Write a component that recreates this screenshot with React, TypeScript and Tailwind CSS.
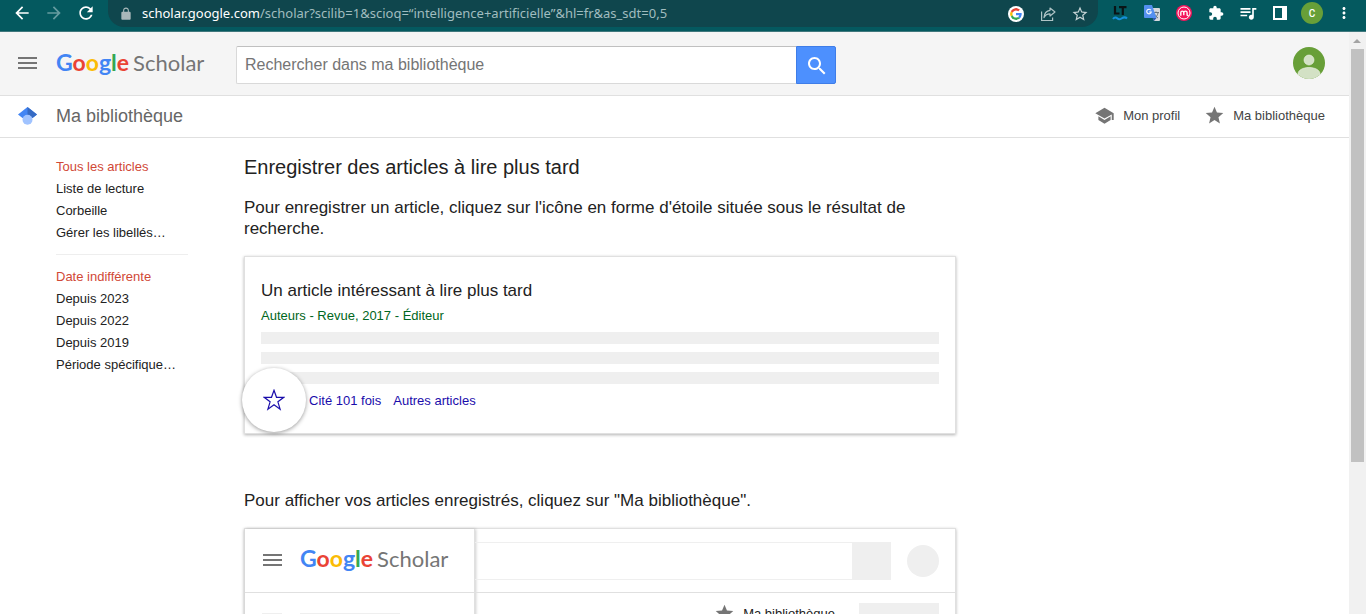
import type { ReactNode } from "react";

const libelles = ["Tous les articles", "Liste de lecture", "Corbeille", "Gérer les libellés…"];
const periodes = ["Date indifférente", "Depuis 2023", "Depuis 2022", "Depuis 2019", "Période spécifique…"];

const STAR =
  "M12 17.27L18.18 21l-1.64-7.03L22 9.24l-7.19-.61L12 2 9.19 8.63 2 9.24l5.46 4.73L5.82 21z";

function Icon({ d, className = "size-5" }: { d: string; className?: string }) {
  return (
    <svg viewBox="0 0 24 24" fill="currentColor" className={className} aria-hidden="true">
      <path d={d} />
    </svg>
  );
}

function ChromeButton({ label, children }: { label: string; children: ReactNode }) {
  return (
    <button aria-label={label} className="flex h-[26px] w-8 shrink-0 items-center justify-center">
      {children}
    </button>
  );
}

// Barre d'adresse du navigateur, avec les extensions à droite.
function BrowserBar() {
  return (
    <div className="flex h-8 shrink-0 items-start border-b border-[#40787d] bg-[#04595f] px-1.5 text-white">
      <ChromeButton label="Précédent">
        <Icon d="M20 11H7.83l5.59-5.59L12 4l-8 8 8 8 1.41-1.41L7.83 13H20v-2z" />
      </ChromeButton>
      <ChromeButton label="Suivant">
        <Icon
          d="M12 4l-1.41 1.41L16.17 11H4v2h12.17l-5.58 5.59L12 20l8-8z"
          className="size-5 text-[#669ca0]"
        />
      </ChromeButton>
      <ChromeButton label="Actualiser">
        <Icon d="M17.65 6.35C16.2 4.9 14.21 4 12 4c-4.42 0-7.99 3.58-7.99 8s3.57 8 7.99 8c3.73 0 6.84-2.55 7.73-6h-2.08c-.82 2.33-3.04 4-5.65 4-3.31 0-6-2.69-6-6s2.69-6 6-6c1.66 0 3.14.69 4.22 1.78L13 11h7V4l-2.35 2.35z" />
      </ChromeButton>

      <div className="mx-1.5 flex h-[27px] min-w-0 flex-1 items-center rounded-b-2xl bg-[#0f464d] pr-0.5 pl-[11px]">
        <Icon
          d="M18 8h-1V6c0-2.76-2.24-5-5-5S7 3.24 7 6v2H6c-1.1 0-2 .9-2 2v10c0 1.1.9 2 2 2h12c1.1 0 2-.9 2-2V10c0-1.100-.9-2-2-2zM15.100 8H8.900V6c0-1.710 1.390-3.100 3.100-3.100 1.710 0 3.100 1.390 3.100 3.100v2z"
          className="size-3.5 shrink-0 text-[#a8b8ba]"
        />
        <span className="ml-[9px] flex-1 truncate font-['Noto_Sans','Open_Sans',sans-serif] text-[13px] text-[#a0bcbf]">
          <span className="text-white">scholar.google.com</span>
          /scholar?scilib=1&amp;scioq=“intelligence+artificielle”&amp;hl=fr&amp;as_sdt=0,5
        </span>
        <ChromeButton label="Google">
          <svg viewBox="0 0 48 48" className="size-4 rounded-full bg-white p-0.5">
            <path fill="#EA4335" d="M24 9.500c3.540 0 6.710 1.220 9.210 3.600l6.850-6.850C35.900 2.380 30.470 0 24 0 14.620 0 6.510 5.380 2.560 13.220l7.980 6.190C12.430 13.720 17.740 9.500 24 9.500z" />
            <path fill="#4285F4" d="M46.980 24.550c0-1.570-.15-3.090-.38-4.550H24v9.020h12.940c-.58 2.960-2.260 5.480-4.780 7.180l7.730 6c4.510-4.180 7.090-10.360 7.090-17.650z" />
            <path fill="#FBBC05" d="M10.530 28.590c-.48-1.450-.76-2.990-.76-4.590s.27-3.140.76-4.590l-7.980-6.190C.92 16.460 0 20.120 0 24c0 3.880.92 7.540 2.560 10.780l7.970-6.190z" />
            <path fill="#34A853" d="M24 48c6.480 0 11.930-2.130 15.890-5.810l-7.730-6c-2.150 1.450-4.920 2.300-8.160 2.300-6.260 0-11.570-4.220-13.470-9.910l-7.980 6.190C6.510 42.620 14.620 48 24 48z" />
          </svg>
        </ChromeButton>
        <ChromeButton label="Partager">
          <svg viewBox="0 0 16 16" fill="none" stroke="#b0c4c6" strokeWidth="1.200" className="size-4">
            <path d="M1.600 5.500v9h11v-3" />
            <path d="M10 2l5 4-5 4V7.800C7 7.800 5.200 9 4 11.500 4.300 7.500 6.500 4.700 10 4.300z" strokeLinejoin="round" />
          </svg>
        </ChromeButton>
        <ChromeButton label="Favori">
          <Icon
            d="M22 9.240l-7.190-.62L12 2 9.190 8.630 2 9.240l5.460 4.730L5.820 21 12 17.270 18.180 21l-1.630-7.030L22 9.240zM12 15.400l-3.760 2.270 1-4.280-3.320-2.880 4.380-.38L12 6.100l1.710 4.040 4.380.38-3.320 2.880 1 4.280L12 15.400z"
            className="size-[18px] text-[#c5d3d5]"
          />
        </ChromeButton>
      </div>

      <ChromeButton label="LanguageTool">
        <svg viewBox="0 0 16 16" fill="none" className="size-4">
          <path d="M3 1v7.500h4.500M7 2.100h7.500M10.800 2V10" stroke="#0a1416" strokeWidth="2.200" />
          <path d="M1 14c1.500-2 3-2 4.500-.5s2.500 1 4 0 3.500-2 5.500 0" stroke="#1590d8" strokeWidth="2" />
        </svg>
      </ChromeButton>
      <ChromeButton label="Google Traduction">
        <svg viewBox="0 0 16 16" className="size-4">
          <path d="M6 3h9a1 1 0 011 1v11a1 1 0 01-1 1h-5z" fill="#d5d8dc" />
          <path d="M9 7.500h6M12 6.500V8M14 8c-.5 2.500-2 4-3.500 5M10.500 9c.8 2 2 3 3.500 4" stroke="#68747c" fill="none" />
          <path d="M1 0h7l4.500 13H1a1 1 0 01-1-1V1a1 1 0 011-1z" fill="#5490f0" />
          <path d="M8.500 13h4L10 16z" fill="#3058b0" />
          <path d="M7 5.300A2.300 2.300 0 107.300 7H5.200" stroke="#fff" fill="none" strokeWidth="1.100" />
        </svg>
      </ChromeButton>
      <ChromeButton label="Mendeley">
        <svg viewBox="0 0 16 16" fill="none" className="size-4">
          <circle cx="8" cy="8" r="8" fill="#f5145b" />
          <circle cx="8" cy="8" r="6" stroke="#fff" strokeWidth="1" />
          <path d="M4.800 10.800V7.800c0-2.200 3-2.200 3 0v2.500V7.800c0-2.200 3.300-2.200 3.300 0v2c0 1 .8 1 1.400.3" stroke="#fff" strokeWidth="1.400" />
        </svg>
      </ChromeButton>
      <ChromeButton label="Extensions">
        <Icon
          d="M20.500 11H19V7c0-1.100-.9-2-2-2h-4V3.500C13 2.120 11.880 1 10.500 1S8 2.120 8 3.500V5H4c-1.100 0-1.990.9-1.990 2v3.800H3.500c1.490 0 2.700 1.210 2.700 2.700s-1.210 2.700-2.700 2.700H2V20c0 1.100.9 2 2 2h3.800v-1.500c0-1.490 1.210-2.700 2.700-2.700 1.490 0 2.700 1.210 2.700 2.700V22H17c1.100 0 2-.9 2-2v-4h1.500c1.380 0 2.500-1.120 2.500-2.500S21.880 11 20.500 11z"
          className="size-4"
        />
      </ChromeButton>
      <ChromeButton label="Lecture en cours">
        <Icon d="M15 6H3v2h12V6zm0 4H3v2h12v-2zM3 16h8v-2H3v2zM17 6v8.180c-.31-.11-.65-.18-1-.18-1.660 0-3 1.340-3 3s1.340 3 3 3 3-1.340 3-3V8h3V6h-5z" />
      </ChromeButton>
      <ChromeButton label="Panneau latéral">
        <svg viewBox="0 0 14 14" className="size-3.5">
          <path d="M0 0h14v14H0zM2 2v10h7V2z" fill="currentColor" fillRule="evenodd" />
        </svg>
      </ChromeButton>
      <ChromeButton label="Profil">
        <span className="flex size-[22px] items-center justify-center rounded-full bg-[#689f38] font-['Roboto',sans-serif] text-[10px] font-medium">
          C
        </span>
      </ChromeButton>
      <ChromeButton label="Menu">
        <Icon d="M12 8c1.100 0 2-.9 2-2s-.9-2-2-2-2 .9-2 2 .9 2 2 2zm0 2c-1.100 0-2 .9-2 2s.9 2 2 2 2-.9 2-2-.9-2-2-2zm0 6c-1.100 0-2 .9-2 2s.9 2 2 2 2-.9 2-2-.9-2-2-2z" className="size-[18px]" />
      </ChromeButton>
    </div>
  );
}

function Burger() {
  return (
    <svg viewBox="0 0 19 12" className="h-3 w-[19px] text-[#757575]" aria-hidden="true">
      <path d="M0 0h19v2H0zM0 5h19v2H0zM0 10h19v2H0z" fill="currentColor" />
    </svg>
  );
}

function Logo() {
  return (
    <span className="flex items-baseline gap-1 pb-0.5 font-['Lato',sans-serif] leading-8 whitespace-nowrap">
      <span className="text-[23px] font-bold">
        <span className="text-[#4285f4]">G</span>
        <span className="text-[#ea4335]">o</span>
        <span className="text-[#fbbc05]">o</span>
        <span className="text-[#4285f4]">g</span>
        <span className="text-[#34a853]">l</span>
        <span className="text-[#ea4335]">e</span>
      </span>
      <span className="text-[22px] text-[#757575]">Scholar</span>
    </span>
  );
}

function Header() {
  return (
    <header className="flex h-16 shrink-0 items-center border-b border-[#e0e0e0] bg-[#f5f5f5] pr-6 pb-px pl-[18px]">
      <button aria-label="Menu principal">
        <Burger />
      </button>
      <a href="#accueil" className="ml-[19px] w-[180px]">
        <Logo />
      </a>
      <form className="mt-1 flex h-[38px] w-[600px]">
        <input
          type="text"
          aria-label="Rechercher dans ma bibliothèque"
          placeholder="Rechercher dans ma bibliothèque"
          className="min-w-0 flex-1 rounded-l-xs border border-r-0 border-[#d9d9d9] border-t-[#c0c0c0] bg-white px-2 text-base placeholder:text-[#757575]"
        />
        <button
          type="button"
          aria-label="Rechercher"
          className="flex w-10 items-center justify-center rounded-r-xs border border-[#3f7de8] bg-[#4d90fe] pt-px pl-0.5 text-white"
        >
          <Icon
            d="M15.500 14h-.79l-.28-.27C15.410 12.590 16 11.110 16 9.500 16 5.910 13.090 3 9.500 3S3 5.910 3 9.500 5.910 16 9.500 16c1.610 0 3.090-.59 4.230-1.570l.27.28v.79l5 4.990L20.490 19l-4.990-5zm-6 0C7.010 14 5 11.990 5 9.500S7.010 5 9.500 5 14 7.010 14 9.500 11.990 14 9.500 14z"
            className="size-6"
          />
        </button>
      </form>
      <button aria-label="Compte" className="ml-auto">
        <svg viewBox="0 0 32 32" className="size-8">
          <clipPath id="avatar">
            <circle cx="16" cy="16" r="16" />
          </clipPath>
          <g clipPath="url(#avatar)" stroke="#f0f6ea" strokeWidth=".6">
            <path d="M0 0h32v32H0z" fill="#689f38" stroke="none" />
            <circle cx="16" cy="13" r="5" fill="#d3e1c5" />
            <path d="M5 33v-6c0-4 5-6.500 11-6.500S27 23 27 27v6z" fill="#d3e1c5" />
          </g>
        </svg>
      </button>
    </header>
  );
}

function SubHeader() {
  return (
    <div className="flex h-[42px] shrink-0 items-center border-b border-[#e0e0e0] pr-6 pb-0.5 pl-[18px] text-[13px] text-[#444]">
      <svg viewBox="0 0 19 18" className="h-[18px] w-[19px]" aria-hidden="true">
        <path d="M9.500 0L0 7.500 4.500 11h10L19 7.500z" fill="#4285f4" />
        <path d="M9.500 0L19 7.500 14.500 11 9.500 8z" fill="#356ac3" />
        <circle cx="9.500" cy="12.800" r="5" fill="#a0c3ff" />
      </svg>
      <h1 className="ml-[19px] text-lg text-[#666]">Ma bibliothèque</h1>
      <nav className="ml-auto flex items-center gap-6">
        <a href="#profil" className="flex items-center gap-2">
          <Icon d="M1.500 9.300L12 3l10.500 6.300V17h-2.200v-6.200L12 15.300zM5 12.900v4.300L12 21.500l7-4.300v-4.300l-7 4.200z" className="size-[21px] text-[#757575]" />
          Mon profil
        </a>
        <a href="#bibliotheque" className="flex items-center gap-2">
          <Icon d={STAR} className="size-[21px] text-[#757575]" />
          Ma bibliothèque
        </a>
      </nav>
    </div>
  );
}

// Liste de filtres, le premier étant celui qui est actif.
function Filters({ items }: { items: string[] }) {
  return (
    <ul>
      {items.map((item, i) => (
        <li key={item}>
          <a href="#filtre" className={i === 0 ? "text-[#d14836]" : "text-[#222]"}>
            {item}
          </a>
        </li>
      ))}
    </ul>
  );
}

function ArticleCard() {
  return (
    <section className="relative mt-[17px] h-[178px] border border-[#e0e0e0] px-4 pt-[22px] shadow-[0_1px_3px_rgba(0,0,0,0.3)]">
      <h3 className="text-[17px] leading-6">Un article intéressant à lire plus tard</h3>
      <p className="text-[13px] leading-[26px] text-[#006621]">Auteurs - Revue, 2017 - Éditeur</p>
      <div className="mt-[3px] flex flex-col gap-2">
        <div className="h-3 bg-[#efefef]" />
        <div className="h-3 bg-[#efefef]" />
        <div className="h-3 bg-[#efefef]" />
      </div>
      <div className="mt-[7px] flex gap-3 pl-12 text-[13px] leading-5 text-[#1a0dab]">
        <a href="#citations">Cité 101 fois</a>
        <a href="#autres">Autres articles</a>
      </div>
      <button
        aria-label="Enregistrer"
        className="absolute bottom-px -left-[3px] flex size-16 items-center justify-center rounded-full bg-white text-[#1a0dab] shadow-[0_1px_4px_rgba(0,0,0,0.4)]"
      >
        <svg viewBox="0 0 22 22" fill="none" stroke="currentColor" strokeWidth="1.200" className="size-[22px]">
          <path d="M11 1.300l2.500 7h7.300l-5.900 4.500 2.200 7.400L11 15.800l-6.100 4.400 2.200-7.400-5.900-4.500h7.300z" />
        </svg>
      </button>
    </section>
  );
}

// Aperçu schématique de la page, pour montrer où se trouve la bibliothèque.
function PreviewCard() {
  return (
    <section className="mt-[17px] flex h-[178px] border border-[#e0e0e0] shadow-[0_1px_3px_rgba(0,0,0,0.3)]">
      <div className="w-[230px] shrink-0 border-r border-[#e0e0e0] shadow-[1px_0_3px_rgba(0,0,0,0.2)]">
        <div className="flex h-16 items-center gap-[18px] border-b border-[#e0e0e0] pb-0.5 pl-[18px]">
          <Burger />
          <Logo />
        </div>
        <div className="flex gap-[18px] pt-5 pl-[17px]">
          <div className="h-5 w-5 bg-[#efefef]" />
          <div className="h-5 w-[100px] bg-[#efefef]" />
        </div>
      </div>
      <div className="min-w-0 flex-1">
        <div className="flex h-16 items-center border-b border-[#e0e0e0] pr-4">
          <div className="h-[38px] flex-1 border-y border-[#efefef]" />
          <div className="h-[38px] w-[39px] bg-[#efefef]" />
          <div className="ml-4 size-8 rounded-full bg-[#efefef]" />
        </div>
        <div className="flex items-start justify-end pt-2.5 pr-4 text-[13px] leading-5">
          <span className="mr-6 flex items-center gap-2">
            <Icon d={STAR} className="size-[21px] text-[#757575]" />
            Ma bibliothèque
          </span>
          <div className="h-5 w-20 bg-[#efefef]" />
        </div>
      </div>
    </section>
  );
}

export default function App() {
  return (
    <div className="flex h-screen flex-col overflow-hidden bg-white font-['Liberation_Sans',Arial,sans-serif] text-[#222]">
      <BrowserBar />
      <div className="flex min-h-0 flex-1">
        <div className="flex min-w-0 flex-1 flex-col overflow-hidden">
          <Header />
          <SubHeader />
          <main className="flex gap-14 pt-[17px] pl-14">
            <aside className="w-[132px] shrink-0 pt-px text-[13px] leading-[22px]">
              <Filters items={libelles} />
              <hr className="mt-2.5 mb-[11px] border-[#eee]" />
              <Filters items={periodes} />
            </aside>
            <div className="w-[712px]">
              <h2 className="text-xl leading-6">Enregistrer des articles à lire plus tard</h2>
              <p className="mt-[18px] text-[17px] leading-[21px]">
                Pour enregistrer un article, cliquez sur l'icône en forme d'étoile située sous le résultat de recherche.
              </p>
              <ArticleCard />
              <p className="mt-14 text-[17px] leading-[21px]">
                Pour afficher vos articles enregistrés, cliquez sur "Ma bibliothèque".
              </p>
              <PreviewCard />
            </div>
          </main>
        </div>
        {/* Barre de défilement */}
        <div className="flex w-[17px] shrink-0 flex-col items-center bg-[#f1f1f1]">
          <svg viewBox="0 0 17 17" className="size-[17px] shrink-0">
            <path d="M4 11h8L8 7z" fill="#a3a3a3" />
          </svg>
          <div className="h-[71%] w-[13px] bg-[#c1c1c1]" />
        </div>
      </div>
    </div>
  );
}
